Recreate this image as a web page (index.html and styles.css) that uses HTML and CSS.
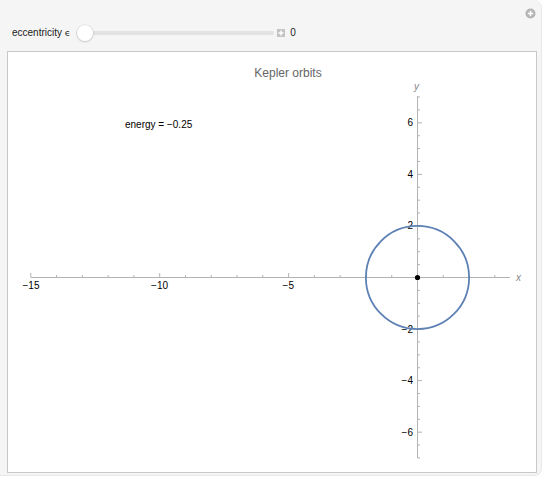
FILE: index.html
```html
<!DOCTYPE html>
<html>
<head>
<meta charset="utf-8">
<link rel="stylesheet" href="styles.css">
</head>
<body>
<div class="panel">
  <div class="topbar">
    <svg class="addicon" width="11" height="11" viewBox="0 0 11 11">
      <circle cx="5.5" cy="5.5" r="5" fill="#b4b4b4"/>
      <path d="M5.5 2.8v5.4M2.8 5.5h5.4" stroke="#fff" stroke-width="1.6"/>
    </svg>
  </div>
  <div class="controls">
    <span class="label">eccentricity <span class="eps">ϵ</span></span>
    <div class="slider">
      <div class="track"></div>
      <div class="thumb"></div>
    </div>
    <span class="plusbtn">
      <svg width="8" height="8" viewBox="0 0 8 8"><path d="M4 1.5v5M1.5 4h5" stroke="#fff" stroke-width="1.4"/></svg>
    </span>
    <span class="value">0</span>
  </div>
  <div class="plotbox">
    <svg class="plot" width="528" height="420" viewBox="8 52 528 420">
      <text x="288" y="77" class="title" text-anchor="middle">Kepler orbits</text>
      <text x="125" y="128" class="energy">energy = −0.25</text>
      <g stroke="#b3b3b3" stroke-width="1">
        <line x1="31" y1="277.5" x2="510" y2="277.5"/>
        <line x1="417.5" y1="96" x2="417.5" y2="458"/>
      </g>
      <g id="xticks" stroke="#b3b3b3" stroke-width="1"></g>
      <g id="yticks" stroke="#b3b3b3" stroke-width="1"></g>
      <g class="ticklbl" text-anchor="middle">
        <text x="31" y="289">−15</text>
        <text x="159.6" y="289">−10</text>
        <text x="288.3" y="289">−5</text>
      </g>
      <g class="ticklbl" text-anchor="end">
        <text x="413" y="126">6</text>
        <text x="413" y="177.6">4</text>
        <text x="413" y="229.3">2</text>
        <text x="413" y="332.6">−2</text>
        <text x="413" y="384.3">−4</text>
        <text x="413" y="435.9">−6</text>
      </g>
      <text x="516" y="281" class="axlbl">x</text>
      <text x="414" y="90" class="axlbl">y</text>
      <circle cx="417.5" cy="277.5" r="51.6" fill="none" stroke="#5e81b5" stroke-width="1.8"/>
      <circle cx="417.5" cy="277.5" r="2.6" fill="#000"/>
    </svg>
  </div>
</div>
<script>
(function(){
  var ns="http://www.w3.org/2000/svg";
  var u=25.78, ox=417.5, oy=277.5;
  var gx=document.getElementById("xticks");
  for(var i=-15;i<=3;i++){
    if(i===0) continue;
    var x=ox+i*u, len=(i%5===0)?4.5:2.5;
    var l=document.createElementNS(ns,"line");
    l.setAttribute("x1",x);l.setAttribute("x2",x);
    l.setAttribute("y1",oy);l.setAttribute("y2",oy-len);
    gx.appendChild(l);
  }
  var gy=document.getElementById("yticks");
  for(var j=-14;j<=14;j++){
    if(j===0) continue;
    var y=oy-j*u/2, len2=(j%4===0)?4.5:2.5;
    var m=document.createElementNS(ns,"line");
    m.setAttribute("x1",ox);m.setAttribute("x2",ox+len2);
    m.setAttribute("y1",y);m.setAttribute("y2",y);
    gy.appendChild(m);
  }
})();
</script>
</body>
</html>
```
FILE: styles.css
```css
html, body {
  margin: 0;
  padding: 0;
  background: #ffffff;
}
body {
  font-family: "Liberation Sans", Arial, sans-serif;
}
.panel {
  width: 541px;
  height: 475px;
  background: #f5f5f5;
  border: 1px solid #e8e8e8;
  border-top: none;
  border-left: none;
  border-radius: 0 8px 8px 0;
  box-sizing: content-box;
  padding: 0;
  display: flex;
  flex-direction: column;
}
.topbar {
  height: 22px;
  display: flex;
  justify-content: flex-end;
  align-items: flex-start;
  padding: 8px 5px 0 0;
  box-sizing: border-box;
}
.addicon {
  display: block;
}
.controls {
  height: 22px;
  display: flex;
  align-items: center;
  padding-left: 12px;
  font-size: 10px;
  color: #1a1a1a;
}
.label {
  margin-right: 6px;
  line-height: 12px;
}
.eps {
  font-family: "DejaVu Sans", sans-serif;
  font-size: 9px;
}
.slider {
  position: relative;
  width: 198px;
  height: 18px;
}
.track {
  position: absolute;
  left: 0;
  right: 0;
  top: 7px;
  height: 4px;
  border-radius: 2px;
  background: #e2e2e2;
}
.thumb {
  position: absolute;
  left: 1px;
  top: 0.5px;
  width: 16px;
  height: 16px;
  border-radius: 50%;
  background: #ffffff;
  box-shadow: 0 0 0 0.6px #cfcfcf, 0 1px 2px rgba(0,0,0,0.18);
}
.plusbtn {
  width: 8px;
  height: 8px;
  background: #c4c4c4;
  margin-left: 3px;
  display: flex;
  align-items: center;
  justify-content: center;
}
.plusbtn svg {
  display: block;
}
.value {
  margin-left: 5px;
  line-height: 12px;
}
.plotbox {
  margin: 7px 0 0 7px;
  width: 528px;
  height: 420px;
  background: #ffffff;
  border: 1px solid #c8c8c8;
}
.plot {
  display: block;
}
.title {
  font-size: 12px;
  fill: #666666;
  font-family: "Liberation Sans", Arial, sans-serif;
}
.energy {
  font-size: 10px;
  fill: #000000;
  font-family: "Liberation Sans", Arial, sans-serif;
}
.ticklbl text {
  font-size: 10px;
  fill: #000000;
  font-family: "Liberation Sans", Arial, sans-serif;
}
.axlbl {
  font-size: 10px;
  font-style: italic;
  fill: #888888;
  font-family: "Liberation Sans", Arial, sans-serif;
}
```
